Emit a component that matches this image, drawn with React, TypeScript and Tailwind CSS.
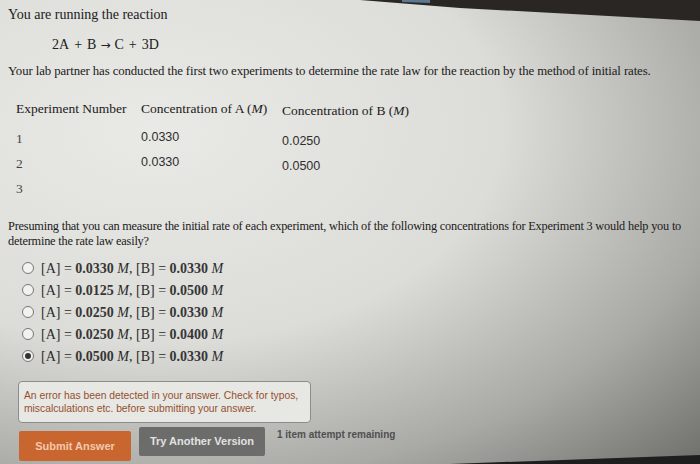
import React from "react";

const serif = { fontFamily: '"Liberation Serif", "Times New Roman", serif' };
const sans = { fontFamily: '"Liberation Sans", Arial, sans-serif' };

function Radio({ checked }: { checked?: boolean }) {
  return (
    <span className="inline-flex h-[12px] w-[12px] items-center justify-center rounded-full border border-[#777] bg-[#f2f2f0]">
      {checked && <span className="h-[6px] w-[6px] rounded-full bg-[#333]" />}
    </span>
  );
}

function Option({ a, b, checked }: { a: string; b: string; checked?: boolean }) {
  return (
    <div className="flex h-[22px] items-center gap-[7px]">
      <Radio checked={checked} />
      <span className="whitespace-nowrap text-[14px] text-[#2a2a2a]">
        [A] = <span className="font-bold text-[#363636]">{a}</span> <i>M</i>, [B] ={" "}
        <span className="font-bold text-[#363636]">{b}</span> <i>M</i>
      </span>
    </div>
  );
}

export default function App() {
  return (
    <div
      className="relative h-[464px] w-[700px] overflow-hidden bg-[radial-gradient(ellipse_at_22%_28%,#e9e9e6_0%,#dcdcd8_45%,#a9a9a5_75%,#6e6e6a_100%)]"
      style={serif}
    >
      {/* monitor bezel, photo edges */}
      <svg className="absolute left-0 top-0" width="700" height="464" viewBox="0 0 700 464">
        <polygon points="360,0 700,0 700,21 460,8" fill="#2a2624" />
        <polygon points="402,0 430,0 430,3 402,2" fill="#5a7890" />
        <polygon points="450,464 700,455 700,464" fill="#1e1e1e" />
      </svg>

      <div className="relative flex flex-col px-[8px] pt-[5px] text-[#202020]">
        <div className="h-[20px] text-[14px] leading-[20px]">You are running the reaction</div>
        <div className="mt-[10px] flex h-[20px] items-center whitespace-nowrap pl-[44px] text-[14px] leading-[20px]">
          2A<span className="mx-[5px]">+</span>B
          <span className="mx-[4px] text-[12px]" style={{ fontFamily: '"DejaVu Sans", sans-serif' }}>
            →
          </span>
          C<span className="mx-[5px]">+</span>3D
        </div>
        <div className="mt-[6px] h-[20px] whitespace-nowrap text-[12.8px] leading-[20px] tracking-[-0.1px]">
          Your lab partner has conducted the first two experiments to determine the rate law for the reaction by
          the method of initial rates.
        </div>

        <div className="mt-[17px] grid grid-cols-[125px_141px_1fr] pl-[8px] text-[13.5px]">
          <div className="h-[22px] whitespace-nowrap leading-[22px]">Experiment Number</div>
          <div className="h-[22px] whitespace-nowrap leading-[22px]">
            Concentration of A (<i>M</i>)
          </div>
          <div className="h-[22px] whitespace-nowrap pt-[2px] leading-[22px]">
            Concentration of B (<i>M</i>)
          </div>

          <div className="h-[25px] pt-[8px] leading-[22px] text-[#444]">1</div>
          <div className="h-[25px] pt-[6px] text-[12.5px] leading-[22px] text-[#2e2e2e]" style={sans}>0.0330</div>
          <div className="h-[25px] pt-[10px] text-[12.5px] leading-[22px] text-[#2e2e2e]" style={sans}>0.0250</div>

          <div className="h-[25px] pt-[8px] leading-[22px] text-[#444]">2</div>
          <div className="h-[25px] pt-[6px] text-[12.5px] leading-[22px] text-[#2e2e2e]" style={sans}>0.0330</div>
          <div className="h-[25px] pt-[10px] text-[12.5px] leading-[22px] text-[#2e2e2e]" style={sans}>0.0500</div>

          <div className="h-[25px] pt-[8px] leading-[22px] text-[#444]">3</div>
          <div />
          <div />
        </div>

        <div className="mt-[24px] whitespace-nowrap text-[12.3px] leading-[15px] tracking-[-0.2px]">
          Presuming that you can measure the initial rate of each experiment, which of the following concentrations
          for Experiment 3 would help you to
          <br />
          determine the rate law easily?
        </div>

        <div className="mt-[8px] flex flex-col pl-[14px]">
          <Option a="0.0330" b="0.0330" />
          <Option a="0.0125" b="0.0500" />
          <Option a="0.0250" b="0.0330" />
          <Option a="0.0250" b="0.0400" />
          <Option a="0.0500" b="0.0330" checked />
        </div>

        <div
          className="ml-[10px] mt-[14px] w-[293px] rounded-[4px] border-[1.5px] border-[#8c8c8c] bg-[#e7e7e4] px-[5px] py-[7px] text-[10.3px] leading-[13px] text-[#94502e]"
          style={sans}
        >
          An error has been detected in your answer. Check for typos, miscalculations etc. before submitting your
          answer.
        </div>

        <div className="ml-[11px] mt-[4px] flex items-start gap-[8px]" style={sans}>
          <div className="mt-[4px] flex h-[30px] w-[112px] items-center justify-center rounded-[2px] bg-[#c9652e] text-[11px] font-bold text-[#f3c9ad]">
            Submit Answer
          </div>
          <div className="flex h-[29px] w-[126px] items-center justify-center rounded-[2px] bg-[#6c6c6b] text-[11px] font-bold text-[#e2e2e2]">
            Try Another Version
          </div>
          <div className="ml-[4px] text-[10px] font-bold text-[#505050]">1 item attempt remaining</div>
        </div>
      </div>
    </div>
  );
}
